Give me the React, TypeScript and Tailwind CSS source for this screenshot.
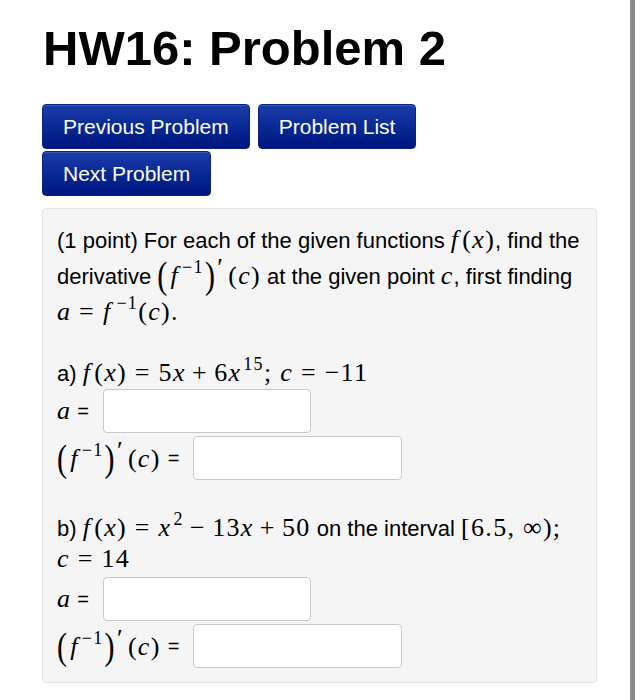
import React from "react";

const sans = { fontFamily: '"Liberation Sans", Arial, Helvetica, sans-serif' };

function M({ children }: { children: React.ReactNode }) {
  return (
    <span
      className="text-[26px] leading-none tracking-[0.05em]"
      style={{ fontFamily: '"Liberation Serif", "Times New Roman", serif' }}
    >
      {children}
    </span>
  );
}

function V({ children }: { children: React.ReactNode }) {
  return <i className="italic">{children}</i>;
}

function F() {
  return <i className="italic mr-[3px]">f</i>;
}

function Rel({ children }: { children: React.ReactNode }) {
  return <span className="mx-[0.3em]">{children}</span>;
}

function Bin({ children }: { children: React.ReactNode }) {
  return <span className="mx-[0.24em]">{children}</span>;
}

function Sup({ children }: { children: React.ReactNode }) {
  return <sup className="text-[18px] top-[-0.6em] ml-[2px]">{children}</sup>;
}

function BigP({ children }: { children: React.ReactNode }) {
  return (
    <span className="inline-block scale-y-[1.25] text-[30px] leading-none align-[-1px]">{children}</span>
  );
}

function InvDeriv() {
  return (
    <M>
      <BigP>(</BigP>
      <i className="italic ml-[2px] mr-[3px]">f</i>
      <sup className="text-[18px] top-[-0.62em] mr-[1px]">−1</sup>
      <BigP>)</BigP>
      <sup className="text-[26px] top-[-0.32em] ml-[1px]">′</sup>
      <span className="ml-[4px]">
        (<V>c</V>)
      </span>
    </M>
  );
}

function Btn({ children }: { children: React.ReactNode }) {
  return (
    <button
      className="h-[45px] px-[20px] rounded-[4px] text-white text-[21px] bg-gradient-to-b from-[#1a3caa] to-[#00147f] border border-[#0a237f] shadow-[inset_0_1px_0_rgba(255,255,255,0.15)]"
      style={sans}
    >
      {children}
    </button>
  );
}

function InputRows() {
  return (
    <div className="flex flex-col gap-[3px]">
      <div className="flex items-center h-[44px]">
        <span className="w-[46px] flex items-center">
          <M>
            <V>a</V>
          </M>
          <span className="ml-[6px] text-[20px]">=</span>
        </span>
        <div className="h-[44px] w-[208px] bg-white border border-[#c8c8c8] rounded-[4px]" />
      </div>
      <div className="flex items-center h-[44px]">
        <span className="w-[136px] flex items-center">
          <InvDeriv />
          <span className="ml-[7px] text-[20px]">=</span>
        </span>
        <div className="h-[44px] w-[209px] bg-white border border-[#c8c8c8] rounded-[4px]" />
      </div>
    </div>
  );
}

export default function App() {
  return (
    <div className="flex min-h-[700px] bg-white text-black" style={sans}>
      <div className="w-[630px] shrink-0 pl-[42px] pt-[20px]">
        <h1 className="text-[49px] font-bold leading-[56px] ml-[1px]">HW16: Problem 2</h1>
        <div className="mt-[28px] flex flex-col gap-[2px]">
          <div className="flex gap-[8px]">
            <Btn>Previous Problem</Btn>
            <Btn>Problem List</Btn>
          </div>
          <div className="flex">
            <Btn>Next Problem</Btn>
          </div>
        </div>
        <div className="mt-[12px] w-[555px] bg-[#f5f5f5] border border-[#e3e3e3] rounded-[4px] pl-[14px] pr-[10px] pt-[14px] pb-[14px] text-[22px] leading-[36px]">
          <div>
            <div className="whitespace-nowrap">
              (1 point) For each of the given functions{" "}
              <M>
                <F />(<V>x</V>)
              </M>
              , find the
            </div>
            <div className="whitespace-nowrap">
              derivative <InvDeriv /> at the given point{" "}
              <M>
                <V>c</V>
              </M>
              , first finding
            </div>
            <div>
              <M>
                <V>a</V>
                <Rel>=</Rel>
                <F />
                <Sup>−1</Sup>(<V>c</V>).
              </M>
            </div>
          </div>
          <div className="mt-[28px] leading-[30px] whitespace-nowrap">
            a){" "}
            <M>
              <F />(<V>x</V>)<Rel>=</Rel>5<V>x</V>
              <Bin>+</Bin>6<V>x</V>
              <Sup>15</Sup>; <V>c</V>
              <Rel>=</Rel>−11
            </M>
          </div>
          <InputRows />
          <div className="mt-[33px] leading-[31px]">
            <div className="whitespace-nowrap">
              b){" "}
              <M>
                <F />(<V>x</V>)<Rel>=</Rel>
                <V>x</V>
                <Sup>2</Sup>
                <Bin>−</Bin>13<V>x</V>
                <Bin>+</Bin>50
              </M>{" "}
              on the interval <M>[6.5, ∞);</M>
            </div>
            <div>
              <M>
                <V>c</V>
                <Rel>=</Rel>14
              </M>
            </div>
          </div>
          <div className="mt-[2px]">
            <InputRows />
          </div>
        </div>
      </div>
      <div className="w-[5px] shrink-0 bg-[#8a8a8a]" />
      <div className="flex-1 bg-white" />
    </div>
  );
}
